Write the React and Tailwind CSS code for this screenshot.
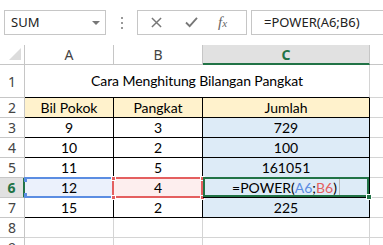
const cellFont = { fontFamily: 'Lato, "Noto Sans", sans-serif' };
const uiFont = { fontFamily: '"Noto Sans", "Open Sans", sans-serif' };

const rows = [
  { n: 3, a: '9', b: '3', c: '729' },
  { n: 4, a: '10', b: '2', c: '100' },
  { n: 5, a: '11', b: '5', c: '161051' },
];

function RowHead({ n, active }) {
  if (active) {
    return (
      <div className="flex h-full items-center justify-center border-b border-r-2 border-b-[#c6c6c6] border-r-[#217346] bg-[#e1e1e1] text-[14px] font-bold text-[#217346]" style={uiFont}>
        {n}
      </div>
    );
  }
  return (
    <div className="flex h-full items-center justify-center border-b border-r border-[#c6c6c6] text-[14px] text-[#444]" style={uiFont}>
      {n}
    </div>
  );
}

function Cell({ children, className = '' }) {
  return (
    <div className={`flex h-full items-center justify-center border-b border-r text-[14px] text-black ${className}`}>
      {children}
    </div>
  );
}

function Corner({ className }) {
  return <span className={`absolute h-[5px] w-[5px] ${className}`} />;
}

export default function App() {
  return (
    <div className="h-[245px] w-[383px] overflow-hidden bg-white" style={cellFont}>
      {/* formula bar */}
      <div className="flex h-[45px] items-start pt-[10px]" style={uiFont}>
        <div className="ml-[4px] flex h-[25px] w-[102px] items-center justify-between border border-[#c6c6c6] pl-[6px] pr-[5px] text-[13px] text-[#222]">
          <span>SUM</span>
          <span className="h-0 w-0 border-x-[4px] border-t-[4px] border-x-transparent border-t-[#777]" />
        </div>
        <div className="ml-[14px] flex h-[25px] w-[4px] flex-col items-center justify-center gap-[3px]">
          <span className="h-[2px] w-[2px] bg-[#999]" />
          <span className="h-[2px] w-[2px] bg-[#999]" />
          <span className="h-[2px] w-[2px] bg-[#999]" />
        </div>
        <div className="ml-[13px] flex h-[25px] w-[110px] items-center border border-[#c6c6c6] text-[#777]">
          <svg viewBox="0 0 12 12" className="ml-[13px] h-[11px] w-[11px]" stroke="currentColor" strokeWidth="1.6" fill="none">
            <path d="M1 1 L11 11 M11 1 L1 11" />
          </svg>
          <svg viewBox="0 0 14 12" className="ml-[23px] h-[11px] w-[13px]" stroke="currentColor" strokeWidth="2" fill="none">
            <path d="M1 6 L5 10 L13 1" />
          </svg>
          <span className="ml-[20px] text-[15px] italic text-[#666]" style={{ fontFamily: '"Liberation Serif", serif' }}>
            f<span className="text-[11px]">x</span>
          </span>
        </div>
        <div className="ml-[4px] flex h-[25px] flex-1 items-center border border-r-0 border-[#c6c6c6] pl-[12px] text-[13px] text-[#222]">
          =POWER(A6;B6)
        </div>
      </div>

      {/* grid */}
      <div className="grid grid-cols-[25px_89px_89px_167px_1fr] grid-rows-[20px_33px_repeat(8,20px)]">
        {/* column headers */}
        <div className="relative border-b border-r border-[#c6c6c6]">
          <span className="absolute bottom-[4px] right-[3px] h-0 w-0 border-b-[12px] border-l-[12px] border-b-[#dcdcdc] border-l-transparent" />
        </div>
        <div className="flex items-center justify-center border-b border-r border-[#c6c6c6] text-[14px] text-[#444]" style={uiFont}>A</div>
        <div className="flex items-center justify-center border-b border-r border-[#c6c6c6] text-[14px] text-[#444]" style={uiFont}>B</div>
        <div className="flex items-center justify-center border-b-2 border-r border-b-[#217346] border-r-[#c6c6c6] bg-[#e1e1e1] text-[14px] font-bold text-[#217346]" style={uiFont}>C</div>
        <div className="border-b border-[#c6c6c6]" />

        {/* row 1 */}
        <RowHead n={1} />
        <div className="col-span-3 flex items-end justify-center border-b border-r border-b-black border-r-[#d4d4d4] pb-[6px] text-[14px] tracking-[-0.1px] text-black">
          Cara Menghitung Bilangan Pangkat
        </div>
        <div className="border-b border-[#d4d4d4]" />

        {/* row 2 */}
        <RowHead n={2} />
        <Cell className="border-black bg-[#fff2cc]">Bil Pokok</Cell>
        <Cell className="border-black bg-[#fff2cc]">Pangkat</Cell>
        <Cell className="border-black bg-[#fff2cc]">Jumlah</Cell>
        <div className="border-b border-[#d4d4d4]" />

        {rows.map((r) => (
          <div key={r.n} className="contents">
            <RowHead n={r.n} />
            <Cell className="border-black">{r.a}</Cell>
            <Cell className="border-black">{r.b}</Cell>
            <Cell className="border-black bg-[#ddebf7]">{r.c}</Cell>
            <div className="border-b border-[#d4d4d4]" />
          </div>
        ))}

        {/* row 6 (editing) */}
        <RowHead n={6} active />
        <div className="relative flex items-center justify-center border-b border-r border-black bg-[#ebf1fc] text-[14px] text-black">
          <span className="absolute inset-x-0 -top-px h-[2px] bg-[#5b8de2]" />
          <span className="absolute inset-x-0 bottom-[-1px] h-[2px] bg-[#5b8de2]" />
          <span className="absolute -left-px -top-px h-[5px] w-[3px] bg-[#5b8de2]" />
          <span className="absolute -left-px bottom-[-1px] h-[5px] w-[3px] bg-[#5b8de2]" />
          12
        </div>
        <div className="relative flex items-center justify-center border-b border-r border-black bg-[#fdeeee] text-[14px] text-black">
          <span className="absolute inset-x-0 -top-px h-[2px] bg-[#e45f5f]" />
          <span className="absolute inset-x-0 bottom-[-1px] h-[2px] bg-[#e45f5f]" />
          <span className="absolute -left-[2px] inset-y-0 w-[2px] bg-[#e45f5f]" />
          <span className="absolute -right-px inset-y-0 w-[2px] bg-[#e45f5f]" />
          <Corner className="-left-[3px] -top-[2px] border border-white bg-[#e45f5f]" />
          <Corner className="-left-[3px] bottom-[-3px] border border-white bg-[#e45f5f]" />
          <Corner className="-right-[3px] -top-[2px] border border-white bg-[#e45f5f]" />
          <Corner className="-right-[3px] bottom-[-3px] border border-white bg-[#e45f5f]" />
          4
        </div>
        <div className="relative flex items-center justify-center border-b border-r border-black bg-[#ddebf7] text-[14px] text-black">
          <span className="absolute inset-0 -top-px border-2 border-[#217346]" />
          <span className="absolute -bottom-[3px] -right-[3px] h-[6px] w-[6px] border border-white bg-[#217346]" />
          <span>
            =POWER(<span className="text-[#5b8de2]">A6</span>;<span className="text-[#e45f5f]">B6</span>)
          </span>
          <span className="ml-[2px] h-[18px] w-px bg-[#bbb]" />
        </div>
        <div className="border-b border-[#d4d4d4]" />

        {/* row 7 */}
        <RowHead n={7} />
        <Cell className="border-black">15</Cell>
        <Cell className="border-black">2</Cell>
        <Cell className="border-black bg-[#ddebf7]">225</Cell>
        <div className="border-b border-[#d4d4d4]" />

        {/* rows 8, 9 */}
        {[8, 9].map((n) => (
          <div key={n} className="contents">
            <RowHead n={n} />
            <div className="border-b border-r border-[#d4d4d4]" />
            <div className="border-b border-r border-[#d4d4d4]" />
            <div className="border-b border-r border-[#d4d4d4]" />
            <div className="border-b border-[#d4d4d4]" />
          </div>
        ))}
      </div>
    </div>
  );
}
